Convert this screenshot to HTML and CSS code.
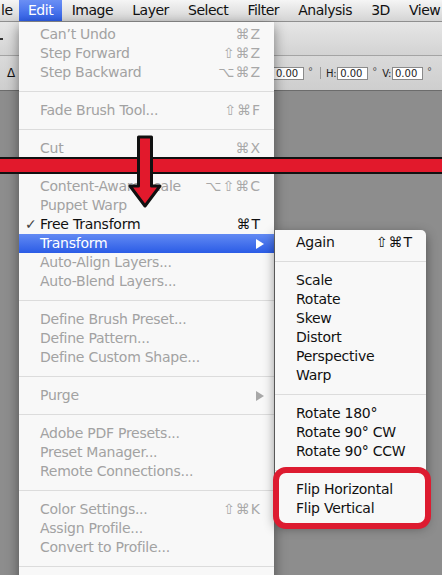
FILE: index.html
```html
<!DOCTYPE html>
<html>
<head>
<meta charset="utf-8">
<link rel="stylesheet" href="styles.css">
</head>
<body>
<div class="screen">
  <div class="menubar">
    <span class="mb-item cut">le</span>
    <span class="mb-item active">Edit</span>
    <span class="mb-item">Image</span>
    <span class="mb-item">Layer</span>
    <span class="mb-item">Select</span>
    <span class="mb-item">Filter</span>
    <span class="mb-item">Analysis</span>
    <span class="mb-item">3D</span>
    <span class="mb-item">View</span>
  </div>
  <div class="toolbar">
    <div class="tb-row tb-row1"><span class="tb-mark"></span></div>
    <div class="tb-row tb-row2">
      <span class="delta">Δ</span>
      <div class="fields">
        <span class="field">0.00</span><span class="deg">°</span>
        <span class="vsep"></span>
        <span class="flabel">H:</span><span class="field">0.00</span><span class="deg">°</span>
        <span class="flabel">V:</span><span class="field">0.00</span><span class="deg">°</span>
      </div>
    </div>
  </div>
  <div class="workspace"></div>

  <div class="menu edit-menu">
    <div class="item"><span class="check"></span><span class="label">Can’t Undo</span><span class="key">⌘Z</span></div>
    <div class="item"><span class="check"></span><span class="label">Step Forward</span><span class="key">⇧⌘Z</span></div>
    <div class="item"><span class="check"></span><span class="label">Step Backward</span><span class="key">⌥⌘Z</span></div>
    <div class="sep"></div>
    <div class="item"><span class="check"></span><span class="label">Fade Brush Tool...</span><span class="key">⇧⌘F</span></div>
    <div class="sep"></div>
    <div class="item"><span class="check"></span><span class="label">Cut</span><span class="key">⌘X</span></div>
    <div class="sep"></div>
    <div class="item"><span class="check"></span><span class="label">Content-Aware Scale</span><span class="key">⌥⇧⌘C</span></div>
    <div class="item"><span class="check"></span><span class="label">Puppet Warp</span><span class="key"></span></div>
    <div class="item on"><span class="check">✓</span><span class="label">Free Transform</span><span class="key">⌘T</span></div>
    <div class="item sel"><span class="check"></span><span class="label">Transform</span><span class="key"><span class="tri"></span></span></div>
    <div class="item"><span class="check"></span><span class="label">Auto-Align Layers...</span><span class="key"></span></div>
    <div class="item"><span class="check"></span><span class="label">Auto-Blend Layers...</span><span class="key"></span></div>
    <div class="sep"></div>
    <div class="item"><span class="check"></span><span class="label">Define Brush Preset...</span><span class="key"></span></div>
    <div class="item"><span class="check"></span><span class="label">Define Pattern...</span><span class="key"></span></div>
    <div class="item"><span class="check"></span><span class="label">Define Custom Shape...</span><span class="key"></span></div>
    <div class="sep"></div>
    <div class="item"><span class="check"></span><span class="label">Purge</span><span class="key"><span class="tri"></span></span></div>
    <div class="sep"></div>
    <div class="item"><span class="check"></span><span class="label">Adobe PDF Presets...</span><span class="key"></span></div>
    <div class="item"><span class="check"></span><span class="label">Preset Manager...</span><span class="key"></span></div>
    <div class="item"><span class="check"></span><span class="label">Remote Connections...</span><span class="key"></span></div>
    <div class="sep"></div>
    <div class="item"><span class="check"></span><span class="label">Color Settings...</span><span class="key">⇧⌘K</span></div>
    <div class="item"><span class="check"></span><span class="label">Assign Profile...</span><span class="key"></span></div>
    <div class="item"><span class="check"></span><span class="label">Convert to Profile...</span><span class="key"></span></div>
    <div class="sep"></div>
  </div>

  <div class="menu submenu">
    <div class="item on"><span class="label">Again</span><span class="key">⇧⌘T</span></div>
    <div class="sep"></div>
    <div class="item on"><span class="label">Scale</span></div>
    <div class="item on"><span class="label">Rotate</span></div>
    <div class="item on"><span class="label">Skew</span></div>
    <div class="item on"><span class="label">Distort</span></div>
    <div class="item on"><span class="label">Perspective</span></div>
    <div class="item on"><span class="label">Warp</span></div>
    <div class="sep"></div>
    <div class="item on"><span class="label">Rotate 180°</span></div>
    <div class="item on"><span class="label">Rotate 90° CW</span></div>
    <div class="item on"><span class="label">Rotate 90° CCW</span></div>
    <div class="sep"></div>
    <div class="item on"><span class="label">Flip Horizontal</span></div>
    <div class="item on"><span class="label">Flip Vertical</span></div>
  </div>

  <div class="red-bar"></div>
  <svg class="down-arrow" width="40" height="80" viewBox="0 0 40 80">
    <path d="M13.5,4 H26.5 V53 H35 L20,73 L5,53 H13.5 Z" fill="#e2192c" stroke="#111" stroke-width="3" stroke-linejoin="round"/>
  </svg>
  <div class="red-box"></div>
</div>
</body>
</html>
```

FILE: styles.css
```css
html, body {
  margin: 0;
  padding: 0;
  height: 100%;
  overflow: hidden;
}
body {
  font-family: "DejaVu Sans", "Noto Sans", sans-serif;
  background: #8d8d8d;
}
.screen {
  position: relative;
  width: 442px;
  height: 575px;
  overflow: hidden;
  display: flex;
  flex-direction: column;
}

/* menu bar */
.menubar {
  height: 21px;
  border-bottom: 1px solid #8f8f8f;
  background: linear-gradient(#f5f5f5, #d4d4d4);
  display: flex;
  font-size: 14px;
  line-height: 21px;
  letter-spacing: -0.5px;
  color: #111;
  white-space: nowrap;
  flex: none;
}
.mb-item { padding: 0 9.6px; }
.mb-item.cut { padding: 0 6px 0 1px; }
.mb-item.active {
  padding: 0 9px 0 9.5px;
  color: #fff;
  background: linear-gradient(#6b8ff4, #2e5ee6);
}

/* toolbar */
.toolbar { flex: none; }
.tb-row { display: flex; align-items: center; }
.tb-row1 {
  height: 33px;
  border-bottom: 1px solid #a4a4a4;
  background: linear-gradient(#e6e6e6, #d3d3d3);
}
.tb-mark {
  width: 3px;
  height: 2px;
  background: #333;
}
.tb-row2 {
  height: 34px;
  border-bottom: 1px solid #6c6c6c;
  background: linear-gradient(#dadada, #cecece);
  padding: 0 10px 0 7px;
  font-size: 10px;
  color: #222;
}
.delta { font-size: 12px; color: #111; }
.fields {
  margin-left: auto;
  display: flex;
  align-items: center;
}
.field {
  width: 27px;
  height: 11px;
  line-height: 11px;
  padding-left: 2px;
  border: 1px solid #8a8a8a;
  background: #fff;
  font-size: 10px;
  color: #222;
}
.deg {
  margin-left: 4px;
  font-size: 10px;
  line-height: 10px;
  color: #555;
  align-self: flex-start;
}
.vsep { width: 1px; height: 12px; background: #999; margin-left: 7px; }
.flabel { margin-left: 5px; margin-right: 1px; letter-spacing: -0.3px; }

.workspace { flex: 1; background: #8d8d8d; }

/* menus */
.menu {
  position: absolute;
  background: #f8f8f8;
  font-size: 14px;
  letter-spacing: -0.25px;
  color: #a2a2a2;
  white-space: nowrap;
  box-shadow: 0 4px 12px rgba(0, 0, 0, 0.45);
}
.edit-menu {
  left: 19px;
  top: 22px;
  width: 255px;
  padding: 3px 0 30px;
}
.submenu {
  left: 275px;
  top: 230px;
  width: 151px;
  padding: 3px 0 5px;
  border-radius: 0 5px 5px 5px;
}
.item {
  height: 19px;
  line-height: 19px;
  display: flex;
  align-items: center;
  padding-right: 13px;
}
.submenu .item { padding-left: 21px; }
.check {
  width: 21px;
  flex: none;
  padding-left: 6px;
  box-sizing: border-box;
  color: #444;
  font-size: 14px;
}
.label { flex: 1; }
.key {
  text-align: right;
  letter-spacing: 1px;
  color: #a8a8a8;
  display: flex;
  align-items: center;
}
.item.on { color: #111; }
.item.on .key { color: #111; }
.item.sel {
  color: #fff;
  background: linear-gradient(#628af3, #2b5ce6);
}
.tri {
  width: 0;
  height: 0;
  border-left: 8px solid #a8a8a8;
  border-top: 5px solid transparent;
  border-bottom: 5px solid transparent;
  margin-right: -3px;
}
.item.sel .tri { border-left-color: #fff; }
.sep {
  height: 19px;
  display: flex;
  align-items: center;
}
.sep::before {
  content: "";
  flex: 1;
  height: 1px;
  background: #dcdcdc;
}

/* annotations */
.red-bar {
  position: absolute;
  left: 0;
  right: 0;
  top: 157px;
  height: 13px;
  border-top: 2px solid #111;
  border-bottom: 2px solid #111;
  background: #e2192c;
}
.down-arrow {
  position: absolute;
  left: 125px;
  top: 133px;
}
.red-box {
  position: absolute;
  left: 273px;
  top: 467px;
  width: 158px;
  height: 62px;
  box-sizing: border-box;
  border: 6px solid #dd1b30;
  border-radius: 13px;
}
```
